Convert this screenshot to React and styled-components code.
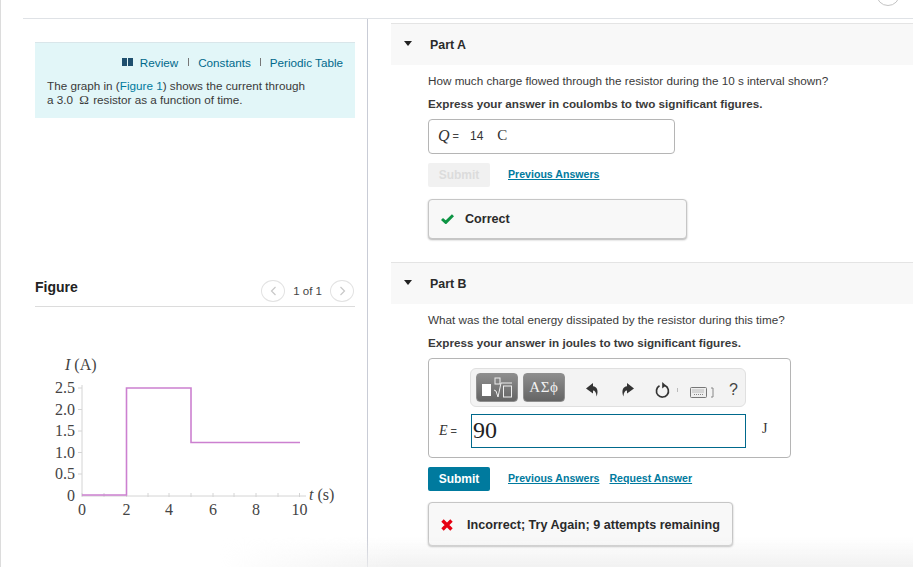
import React from "react";
import styled, { createGlobalStyle } from "styled-components";

const Global = createGlobalStyle`
  html, body { margin: 0; padding: 0; background: #fff; overflow: hidden; }
  body { font-family: "Liberation Sans", Arial, sans-serif; color: #333; font-size: 12px; }
`;

const Page = styled.div`
  position: relative;
  width: 913px;
  height: 567px;
  overflow: hidden;
  box-sizing: border-box;
  padding: 18px 0 0 23px;
  background: #fff;
`;
const EdgeLine = styled.div`
  position: absolute; left: 0; top: 0; bottom: 0; width: 1px; background: #dcdcdc;
`;
const TopCircle = styled.div`
  position: absolute; left: 876px; top: -18px; width: 22px; height: 22px;
  border: 1px solid #c4c4c4; border-radius: 50%;
`;
const BottomFade = styled.div`
  position: absolute; left: 0; right: 0; bottom: 0; height: 30px; pointer-events: none;
  background: linear-gradient(to bottom, rgba(240,240,240,0), rgba(240,240,240,0.9));
  -webkit-mask-image: linear-gradient(to right, transparent 220px, #000 400px);
  mask-image: linear-gradient(to right, transparent 220px, #000 400px);
`;
const Columns = styled.div`
  display: grid;
  grid-template-columns: 344px 1fr;
  height: 549px;
  border-top: 1px solid #dfe2e6;
`;
const Left = styled.aside`
  border-right: 1px solid #c9ccd6;
  padding: 23px 0 0 12px;
  box-sizing: border-box;
  width: 345px;
`;
const Right = styled.main`
  padding: 4px 0 0 24px;
`;
const Intro = styled.section`
  width: 320px;
  height: 76px;
  box-sizing: border-box;
  background: #e2f6f8;
  border-top: 1px solid #d9e6ea;
  padding: 12px 12px 0 12px;
`;
const Links = styled.nav`
  display: flex;
  justify-content: flex-end;
  align-items: center;
  height: 14px;
  color: #00698c;
  font-size: 11.7px;
`;
const Sep = styled.span`
  width: 1px; height: 8px; background: #777; margin: 0 ${(p) => p.$m}px;
`;
const BookWrap = styled.span`
  display: inline-flex; margin-right: 7px;
`;
const IntroText = styled.p`
  margin: 10px 0 0;
  font-size: 11.7px;
  line-height: 14px;
  color: #3a3a3a;
`;
const Link = styled.a`
  color: #007a9e;
`;
const Omega = styled.span`
  font-family: "Liberation Serif", serif;
  font-size: 13px;
  margin: 0 1px 0 3px;
`;
const FigureHead = styled.header`
  margin-top: 160px;
  width: 320px;
  height: 29px;
  box-sizing: border-box;
  border-bottom: 1px solid #dcdcdc;
  display: flex;
  align-items: flex-start;
  justify-content: space-between;
`;
const FigureTitle = styled.h2`
  margin: 0;
  font-size: 14px;
  line-height: 18px;
  color: #222;
  font-weight: bold;
`;
const Pager = styled.div`
  display: flex; align-items: center; height: 23px; margin: 1px 1px 0 0; color: #444; font-size: 11.5px; gap: 8px;
`;
const PagerBtn = styled.span`
  width: 22px; height: 20px; border: 1px solid #e2e2e2; border-radius: 50%;
  display: flex; align-items: center; justify-content: center;
`;
const ChartSvg = styled.svg`
  display: block;
  margin: 43px 0 0 15px;
`;
const Part = styled.section`
  margin-bottom: ${(p) => p.$gap}px;
`;
const PartHead = styled.header`
  height: 42px;
  box-sizing: border-box;
  background: #f8f8f8;
  border-top: 1px solid #e4e4e4;
  display: flex;
  align-items: center;
  padding-left: 13px;
  font-weight: bold;
  font-size: 12.4px;
  color: #2a2a2a;
`;
const Caret = styled.span`
  width: 0; height: 0;
  border-left: 4.5px solid transparent; border-right: 4.5px solid transparent;
  border-top: 5px solid #222;
  margin-right: 18px;
  margin-top: -3px;
`;
const PartBody = styled.div`
  padding-left: 37px;
`;
const Question = styled.p`
  margin: 9px 0 0;
  height: 14px;
  line-height: 14px;
  font-size: 11.7px;
  color: #3a3a3a;
`;
const Instruction = styled.p`
  margin: 9px 0 0;
  height: 14px;
  line-height: 14px;
  font-size: 11.7px;
  font-weight: bold;
  color: #3a3a3a;
`;
const AnswerBox = styled.div`
  margin-top: 8px;
  width: 247px;
  height: 35px;
  box-sizing: border-box;
  border: 1px solid #b5b5b5;
  border-radius: 4px;
  display: flex;
  align-items: center;
  padding: 0 0 2px 9px;
`;
const MathVar = styled.span`
  font-family: "Liberation Serif", serif;
  font-style: italic;
  font-size: ${(p) => p.$size}px;
  color: #333;
`;
const Eq = styled.span`
  font-size: 11px; margin: 0 11px 0 3px; color: #444;
`;
const Val = styled.span`
  font-size: 12px; color: #333; margin-right: 14px;
`;
const Unit = styled.span`
  font-family: "Liberation Serif", serif;
  font-size: 15px;
  color: #333;
`;
const Actions = styled.div`
  display: flex;
  align-items: center;
  margin-top: ${(p) => p.$top}px;
  height: 24px;
`;
const Submit = styled.button`
  width: 62px;
  height: 24px;
  padding: 0;
  border: 0;
  border-radius: 2px;
  font-family: inherit;
  font-size: 12px;
  font-weight: bold;
  color: ${(p) => (p.$off ? "#dcdcdc" : "#fff")};
  background: ${(p) => (p.$off ? "#f1f1f1" : "#007a9e")};
  margin-right: 18px;
`;
const Action = styled.a`
  color: #007a9e;
  font-weight: bold;
  font-size: 10.6px;
  line-height: 12px;
  margin-top: -2px;
  text-decoration: underline;
  margin-right: 10px;
`;
const Feedback = styled.div`
  margin-top: ${(p) => p.$top}px;
  width: ${(p) => p.$w}px;
  height: ${(p) => p.$h}px;
  box-sizing: border-box;
  background: #f8f8f8;
  border: 1px solid #c6c6c6;
  border-radius: 4px;
  box-shadow: 0 1px 2px rgba(0,0,0,.3);
  display: flex;
  align-items: center;
  padding: ${(p) => p.$pt}px 0 0 12px;
  font-weight: bold;
  font-size: 12.6px;
  color: #2a2a2a;
`;
const FeedbackIcon = styled.svg`
  flex: none;
  margin-right: ${(p) => p.$gap}px;
`;
const Editor = styled.div`
  margin-top: 8px;
  width: 363px;
  height: 100px;
  box-sizing: border-box;
  border: 1px solid #b5b5b5;
  border-radius: 4px;
  padding: 9px 0 0 41px;
`;
const Toolbar = styled.div`
  width: 276px;
  height: 39px;
  box-sizing: border-box;
  background: #f3f3f3;
  border: 1px solid #e0e0e0;
  border-radius: 6px;
  display: flex;
  align-items: flex-start;
  padding: 4px 0 0 5px;
`;
const ToolBtn = styled.span`
  width: 42px;
  height: 29px;
  box-sizing: border-box;
  margin-right: 5px;
  border-radius: 4px;
  border: 1px solid #8f8f8f;
  background: linear-gradient(to bottom, #8d8d8d, #656565);
  color: #f2f2f2;
  font-family: "Liberation Serif", serif;
  font-size: 15px;
  letter-spacing: 0.6px;
  display: flex;
  align-items: center;
  justify-content: center;
`;
const ToolIcon = styled.svg`
  flex: none;
  margin-left: ${(p) => p.$left}px;
  margin-top: ${(p) => p.$top}px;
`;
const Help = styled.span`
  font-size: 16px; color: #444; margin: 8px 0 0 14px;
`;
const EntryRow = styled.div`
  margin-top: 7px;
  margin-left: -31px;
  display: flex;
  align-items: center;
`;
const EntryLabel = styled.span`
  width: 32px;
  display: flex;
  align-items: center;
`;
const EntryEq = styled.span`
  font-size: 11px; color: #444; margin-left: 3px;
`;
const Entry = styled.div`
  width: 275px;
  height: 34px;
  box-sizing: border-box;
  border: 1px solid #00698c;
  font-family: "Liberation Serif", serif;
  font-size: 24px;
  line-height: 31px;
  padding-left: 1px;
  color: #222;
`;
const EntryUnit = styled.span`
  font-family: "Liberation Serif", serif;
  font-size: 14px;
  color: #333;
  margin: -4px 0 0 16px;
`;

const Book = () => (
  <svg width="11" height="8" viewBox="0 0 11 8">
    <path d="M0 0h5v8H0zM6 0h5v8H6z" fill="#1f4f6e" />
  </svg>
);

const ticksY = [
  ["2.5", 388],
  ["2.0", 409.5],
  ["1.5", 431],
  ["1.0", 452.5],
  ["0.5", 474],
];
const ticksX = [
  ["0", 82],
  ["2", 126.5],
  ["4", 169],
  ["6", 213],
  ["8", 256],
  ["10", 299.5],
];

const Chart = () => (
  <ChartSvg width="300" height="180" viewBox="50 350 300 180">
    <g stroke="#d4d4d4" strokeWidth="1" fill="none">
      <path d="M82 385V496H306" />
      {ticksY.map(([, y]) => <path key={y} d={`M78 ${y}H82`} />)}
      {[82, 104, 126.5, 148, 169, 191, 213, 234, 256, 278, 299.5].map((x) => (
        <path key={x} d={`M${x} 493V497`} />
      ))}
    </g>
    <path d="M82 495H126.5V388H191V442.5H300" fill="none" stroke="#cc80d0" strokeWidth="1.6" />
    <g fontFamily="Liberation Serif, serif" fontSize="16" fill="#444">
      {ticksY.map(([t, y]) => <text key={t} x="75" y={y + 5} textAnchor="end">{t}</text>)}
      <text x="75" y="501" textAnchor="end">0</text>
      {ticksX.map(([t, x]) => <text key={t} x={x} y="515" textAnchor="middle">{t}</text>)}
      <text x="65" y="370"><tspan fontStyle="italic">I</tspan> (A)</text>
      <text x="309" y="500"><tspan fontStyle="italic">t</tspan> (s)</text>
    </g>
  </ChartSvg>
);

const UNDO = "M7 0 L0 5.5 L7 10.5 V7.6 C9 7.6 10.2 9.4 10.6 13.5 C12.8 7.5 11 3.6 7 3.2 Z";
const REDO = "M6 0 L13 5.5 L6 10.5 V7.6 C4 7.6 2.8 9.4 2.4 13.5 C.2 7.5 2 3.6 6 3.2 Z";

export default function App() {
  return (
    <Page>
      <Global />
      <EdgeLine />
      <TopCircle />
      <Columns>
        <Left>
          <Intro>
            <Links>
              <BookWrap><Book /></BookWrap>
              <span>Review</span><Sep $m={9.5} />
              <span>Constants</span><Sep $m={9} />
              <span>Periodic Table</span>
            </Links>
            <IntroText>
              The graph in (<Link>Figure 1</Link>) shows the current through<br />
              a 3.0 <Omega>Ω</Omega> resistor as a function of time.
            </IntroText>
          </Intro>
          <FigureHead>
            <FigureTitle>Figure</FigureTitle>
            <Pager>
              <PagerBtn>
                <svg width="7" height="10" viewBox="0 0 7 10"><path d="M5.5 1 1.5 5l4 4" fill="none" stroke="#c8c8c8" strokeWidth="1.2" /></svg>
              </PagerBtn>
              <span>1 of 1</span>
              <PagerBtn>
                <svg width="7" height="10" viewBox="0 0 7 10"><path d="M1.5 1l4 4-4 4" fill="none" stroke="#c8c8c8" strokeWidth="1.2" /></svg>
              </PagerBtn>
            </Pager>
          </FigureHead>
          <Chart />
        </Left>
        <Right>
          <Part $gap={23}>
            <PartHead><Caret />Part A</PartHead>
            <PartBody>
              <Question>How much charge flowed through the resistor during the 10 s interval shown?</Question>
              <Instruction>Express your answer in coulombs to two significant figures.</Instruction>
              <AnswerBox>
                <MathVar $size={16}>Q</MathVar><Eq>=</Eq><Val>14</Val><Unit>C</Unit>
              </AnswerBox>
              <Actions $top={9}>
                <Submit $off>Submit</Submit>
                <Action>Previous Answers</Action>
              </Actions>
              <Feedback $top={12} $w={259} $h={40} $pt={0}>
                <FeedbackIcon $gap={11} width="13" height="10" viewBox="0 0 13 10">
                  <path d="M1 5 4.8 8.4 12 1.2" fill="none" stroke="#0d9444" strokeWidth="3" />
                </FeedbackIcon>
                Correct
              </Feedback>
            </PartBody>
          </Part>
          <Part $gap={0}>
            <PartHead><Caret />Part B</PartHead>
            <PartBody>
              <Question>What was the total energy dissipated by the resistor during this time?</Question>
              <Instruction>Express your answer in joules to two significant figures.</Instruction>
              <Editor>
                <Toolbar>
                  <ToolBtn>
                    <svg width="34" height="22" viewBox="0 0 34 22">
                      <rect x="2" y="7" width="9" height="12" fill="#fff" />
                      <rect x="15" y="1" width="5" height="6" fill="none" stroke="#eee" strokeWidth="1" />
                      <path d="M14 13l2 1 2 6 3-14h11" fill="none" stroke="#eee" strokeWidth="1" />
                      <rect x="23.5" y="9" width="8" height="11" fill="none" stroke="#eee" strokeWidth="1" />
                    </svg>
                  </ToolBtn>
                  <ToolBtn>ΑΣϕ</ToolBtn>
                  <ToolIcon $left={16} $top={10} width="13" height="14" viewBox="0 0 13 14">
                    <path d={UNDO} fill="#333" />
                  </ToolIcon>
                  <ToolIcon $left={22} $top={10} width="13" height="14" viewBox="0 0 13 14">
                    <path d={REDO} fill="#333" />
                  </ToolIcon>
                  <ToolIcon $left={21} $top={9} width="15" height="16" viewBox="0 0 15 16">
                    <path d="M4.5 3.8a6 6 0 1 0 5.5-.2" fill="none" stroke="#333" strokeWidth="1.7" />
                    <path d="M7.2 0v6.4L11 3.4z" fill="#333" />
                  </ToolIcon>
                  <ToolIcon $left={7} $top={15} width="1" height="4" viewBox="0 0 1 4"><rect width="1" height="4" fill="#bbb" /></ToolIcon>
                  <ToolIcon $left={12} $top={14} width="25" height="11" viewBox="0 0 25 11">
                    <rect x=".5" y=".5" width="16" height="10" rx="1" fill="#eee" stroke="#777" />
                    <path d="M2.5 3h12M2.5 5h12M4 7.5h9" stroke="#888" strokeWidth="1" strokeDasharray="1 1" />
                    <path d="M21 1h2v9h-2" fill="none" stroke="#888" strokeWidth="1" />
                  </ToolIcon>
                  <Help>?</Help>
                </Toolbar>
                <EntryRow>
                  <EntryLabel><MathVar $size={14}>E</MathVar><EntryEq>=</EntryEq></EntryLabel>
                  <Entry>90</Entry>
                  <EntryUnit>J</EntryUnit>
                </EntryRow>
              </Editor>
              <Actions $top={9}>
                <Submit>Submit</Submit>
                <Action>Previous Answers</Action>
                <Action>Request Answer</Action>
              </Actions>
              <Feedback $top={11} $w={305} $h={44} $pt={2}>
                <FeedbackIcon $gap={14} width="12" height="12" viewBox="0 0 12 12">
                  <path d="M1.5 1.5l9 9M10.5 1.5l-9 9" stroke="#e60012" strokeWidth="3.4" />
                </FeedbackIcon>
                Incorrect; Try Again; 9 attempts remaining
              </Feedback>
            </PartBody>
          </Part>
        </Right>
      </Columns>
      <BottomFade />
    </Page>
  );
}
